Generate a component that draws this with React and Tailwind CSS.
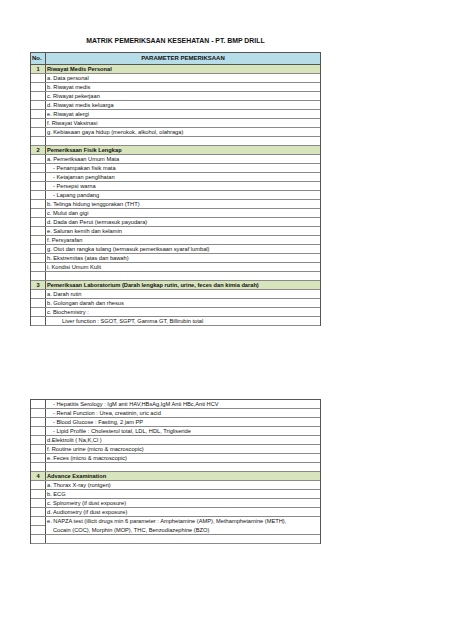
import React from 'react';

const part1 = [
  { no: '1', text: 'Riwayat Medis Personal', section: true },
  { text: 'a. Data personal' },
  { text: 'b. Riwayat medis' },
  { text: 'c. Riwayat pekerjaan' },
  { text: 'd. Riwayat medis keluarga' },
  { text: 'e. Riwayat alergi' },
  { text: 'f. Riwayat Vaksinasi' },
  { text: 'g. Kebiasaan gaya hidup (merokok, alkohol, olahraga)' },
  { text: '' },
  { no: '2', text: 'Pemeriksaan Fisik Lengkap', section: true },
  { text: 'a. Pemeriksaan Umum Mata' },
  { text: '- Penampakan fisik mata', indent: 1 },
  { text: '- Ketajaman penglihatan', indent: 1 },
  { text: '- Persepsi warna', indent: 1 },
  { text: '- Lapang pandang', indent: 1 },
  { text: 'b. Telinga hidung tenggorakan (THT)' },
  { text: 'c. Mulut dan gigi' },
  { text: 'd. Dada dan Perut (termasuk payudara)' },
  { text: 'e. Saluran kemih dan kelamin' },
  { text: 'f. Persyarafan' },
  { text: 'g. Otot dan rangka tulang (termasuk pemeriksaan syaraf lumbal)' },
  { text: 'h. Ekstremitas (atas dan bawah)' },
  { text: 'i. Kondisi Umum Kulit' },
  { text: '' },
  { no: '3', text: 'Pemeriksaan Laboratorium (Darah lengkap rutin, urine, feces dan kimia darah)', section: true },
  { text: 'a. Darah rutin' },
  { text: 'b. Golongan darah dan rhesus' },
  { text: 'c. Biochemistry :' },
  { text: 'Liver function : SGOT, SGPT, Gamma GT, Billirubin total', indent: 2 },
];

const part2 = [
  { text: '- Hepatitis Serology : IgM anti HAV,HBsAg,IgM Anti HBc,Anti HCV', indent: 1 },
  { text: '- Renal Function : Urea, creatinin, uric acid', indent: 1 },
  { text: '- Blood Glucose : Fasting, 2 jam PP', indent: 1 },
  { text: '- Lipid Profile : Cholesterol total, LDL, HDL, Trigliseride', indent: 1 },
  { text: 'd.Elektrolit ( Na,K,Cl )' },
  { text: 'f. Routine urine (micro & macroscopic)' },
  { text: 'e. Feces (micro & macroscopic)' },
  { text: '' },
  { no: '4', text: 'Advance Examination', section: true },
  { text: 'a. Thorax X-ray (rontgen)' },
  { text: 'b. ECG' },
  { text: 'c. Spirometry (if dust exposure)' },
  { text: 'd. Audiometry (if dust exposure)' },
  {
    text: 'e. NAPZA test (illicit drugs min 6 parameter : Amphetamine (AMP), Methamphetamine (METH),',
    text2: 'Cocain (COC), Morphin (MOP), THC, Benzodiazephine (BZO)',
    double: true,
  },
  { text: '' },
];

const indents = ['pl-[1px]', 'pl-[7px]', 'pl-[16px]'];

function Row({ row }) {
  if (row.double) {
    return (
      <div className="flex h-[18px] border-b border-[#8a8a8a]">
        <div className="w-[15px] shrink-0 border-r border-[#555] flex flex-col">
          <div className="h-[9px] border-b border-[#8a8a8a]" />
          <div className="flex-1" />
        </div>
        <div className="flex-1 flex flex-col pl-[1px] leading-[9px] whitespace-nowrap">
          <span>{row.text}</span>
          <span className="pl-[6px]">{row.text2}</span>
        </div>
      </div>
    );
  }
  return (
    <div
      className={
        'flex h-[9px] border-b border-[#8a8a8a] ' + (row.section ? 'bg-[#d8e4bc] font-bold' : 'bg-white')
      }
    >
      <div className="w-[15px] shrink-0 border-r border-[#555] flex items-center justify-center leading-[8px]">
        {row.no}
      </div>
      <div className={'flex-1 flex items-center leading-[8px] whitespace-nowrap ' + indents[row.indent || 0]}>
        {row.text}
      </div>
    </div>
  );
}

export default function App() {
  return (
    <div
      className="w-[474px] h-[632px] bg-white text-[#111] text-[5.7px]"
      style={{ fontFamily: '"Liberation Sans", Arial, sans-serif' }}
    >
      <div className="h-[36px]" />
      <div className="w-[291px] ml-[30px] text-center font-bold text-[6.9px] leading-[9px] h-[16px] text-[#111]">
        MATRIK PEMERIKSAAN KESEHATAN - PT. BMP DRILL
      </div>

      <div className="ml-[30px] w-[291px] border-x border-[#555]">
        <div className="flex h-[13px] bg-[#b7dde8] border-y border-[#555] font-bold text-[6px]">
          <div className="w-[15px] shrink-0 border-r border-[#555] flex items-center pl-[1px]">No.</div>
          <div className="flex-1 flex items-center justify-center">PARAMETER PEMERIKSAAN</div>
        </div>
        {part1.map((row, i) => (
          <Row key={i} row={row} />
        ))}
      </div>

      <div className="h-[73px]" />

      <div className="ml-[30px] w-[291px] border-x border-t border-[#555]">
        {part2.map((row, i) => (
          <Row key={i} row={row} />
        ))}
      </div>
    </div>
  );
}
